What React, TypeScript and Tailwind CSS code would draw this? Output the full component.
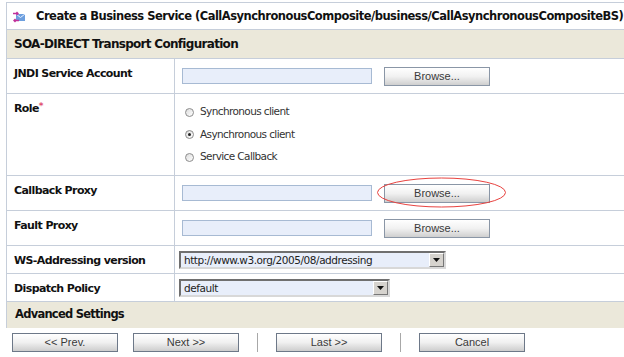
import React from "react";

const tah = { fontFamily: '"DejaVu Sans", Verdana, sans-serif' };

function Label({ children }: { children: React.ReactNode }) {
  return (
    <div
      className="w-[168px] shrink-0 border-r border-[#c6ceda] pl-[7px] pt-[8px] text-[11px] font-bold leading-[13px] tracking-[-0.6px] text-[#111]"
      style={tah}
    >
      {children}
    </div>
  );
}

function BrowseBtn() {
  return (
    <div
      className="flex h-[19px] w-[106px] items-center justify-center border border-[#8a96a6] bg-gradient-to-b from-[#ffffff] via-[#f1f1f1] to-[#cfcfcf] text-[11px] text-[#3a3a3a]"
      style={{ fontFamily: '"Liberation Sans", Arial, sans-serif' }}
    >
      Browse...
    </div>
  );
}

function TextInput() {
  return <div className="h-[16px] w-[190px] border border-[#a7bad3] bg-[#e8eefa]" />;
}

function Radio({ checked, label }: { checked?: boolean; label: string }) {
  return (
    <div className="flex h-[22.5px] items-center">
      <div className="ml-[10px] flex h-[9px] w-[9px] items-center justify-center rounded-full border border-[#8c8c8c] bg-gradient-to-br from-[#dcdcdc] to-[#ffffff]">
        {checked && <div className="h-[3px] w-[3px] rounded-full bg-[#222]" />}
      </div>
      <span
        className="ml-[6px] text-[10.5px] tracking-[-0.6px] text-[#333]"
        style={tah}
      >
        {label}
      </span>
    </div>
  );
}

function Select({ width, text }: { width: number; text: string }) {
  return (
    <div
      className="flex h-[18px] items-stretch border-2 border-t-[#6f6f6f] border-l-[#6f6f6f] border-b-[#d8d8d8] border-r-[#d8d8d8] bg-[#e8eefa]"
      style={{ width }}
    >
      <div
        className="flex-1 pl-[3px] text-[10.5px] leading-[14px] tracking-[-0.45px] text-[#222]"
        style={tah}
      >
        {text}
      </div>
      <div className="flex w-[15px] items-center justify-center border border-t-[#ffffff] border-l-[#ffffff] border-b-[#777] border-r-[#777] bg-[#d6d3ce]">
        <svg width="7" height="4" viewBox="0 0 7 4">
          <path d="M0 0h7L3.5 4z" fill="#111" />
        </svg>
      </div>
    </div>
  );
}

function NavBtn({ children }: { children: React.ReactNode }) {
  return (
    <div
      className="flex h-[19px] w-[106px] items-center justify-center border border-[#6d7888] bg-gradient-to-b from-[#ffffff] via-[#f0f0f0] to-[#cdcdcd] text-[11px] text-[#3a3a3a]"
      style={{ fontFamily: '"Liberation Sans", Arial, sans-serif' }}
    >
      {children}
    </div>
  );
}

export default function App() {
  return (
    <div className="relative h-[357px] w-[624px] overflow-hidden bg-white pt-[2px]">
      <div className="ml-[6px] border-l border-[#c6ceda]">
        {/* title */}
        <div className="flex h-[27px] items-center border-t border-[#c6ceda] pl-[6px] pt-[1px]">
          <svg width="12" height="12" viewBox="0 0 12 12" className="mr-[11px] shrink-0">
            <rect x="3" y="3" width="9" height="7" fill="#6d9fde" />
            <path d="M3 3l4.5 3.5L12 3" fill="none" stroke="#e8f0ff" strokeWidth="1" />
            <path d="M0 2.5h5M3.5 1l1.5 1.5L3.5 4" fill="none" stroke="#c0309a" strokeWidth="1.4" />
            <path d="M1 9.5h5M2.5 8L1 9.5 2.5 11" fill="none" stroke="#c0309a" strokeWidth="1.4" />
          </svg>
          <span
            className="whitespace-nowrap text-[11.5px] font-bold tracking-[-0.5px] text-[#111]"
            style={tah}
          >
            Create a Business Service (CallAsynchronousComposite/business/CallAsynchronousCompositeBS)
          </span>
        </div>
        {/* section header */}
        <div className="flex h-[29px] items-center border-t border-[#c6ceda] bg-[#ebe8da] pl-[7px]">
          <span
            className="whitespace-nowrap text-[12px] font-bold tracking-[-0.7px] text-[#111]"
            style={tah}
          >
            SOA-DIRECT Transport Configuration
          </span>
        </div>
        {/* JNDI */}
        <div className="flex h-[35px] border-t border-[#c6ceda]">
          <Label>JNDI Service Account</Label>
          <div className="flex flex-1 items-center gap-[12px] pl-[7px]">
            <TextInput />
            <BrowseBtn />
          </div>
        </div>
        {/* Role */}
        <div className="flex h-[82px] border-t border-[#c6ceda]">
          <Label>
            Role<span className="relative -top-[3px] text-[9px] text-[#e05070]">*</span>
          </Label>
          <div className="flex flex-1 flex-col pt-[7px]">
            <Radio label="Synchronous client" />
            <Radio checked label="Asynchronous client" />
            <Radio label="Service Callback" />
          </div>
        </div>
        {/* Callback */}
        <div className="flex h-[35px] border-t border-[#c6ceda]">
          <Label>Callback Proxy</Label>
          <div className="flex flex-1 items-center gap-[12px] pl-[7px]">
            <TextInput />
            <BrowseBtn />
          </div>
        </div>
        {/* Fault */}
        <div className="flex h-[35px] border-t border-[#c6ceda]">
          <Label>Fault Proxy</Label>
          <div className="flex flex-1 items-center gap-[12px] pl-[7px]">
            <TextInput />
            <BrowseBtn />
          </div>
        </div>
        {/* WS-Addressing */}
        <div className="flex h-[28px] border-t border-[#c6ceda]">
          <Label>WS-Addressing version</Label>
          <div className="flex flex-1 items-center pl-[4px]">
            <Select width={267} text="http://www.w3.org/2005/08/addressing" />
          </div>
        </div>
        {/* Dispatch */}
        <div className="flex h-[28px] border-t border-[#c6ceda]">
          <Label>Dispatch Policy</Label>
          <div className="flex flex-1 items-center pl-[4px]">
            <Select width={211} text="default" />
          </div>
        </div>
        {/* Advanced */}
        <div className="flex h-[27px] items-center border-t border-[#c6ceda] bg-[#ebe8da] pl-[8px]">
          <span
            className="whitespace-nowrap text-[11.5px] font-bold tracking-[-0.75px] text-[#111]"
            style={tah}
          >
            Advanced Settings
          </span>
        </div>
      </div>
      {/* nav buttons */}
      <div className="mt-[5px] flex items-center pl-[12px]">
        <NavBtn>&lt;&lt; Prev.</NavBtn>
        <div className="w-[15px]" />
        <NavBtn>Next &gt;&gt;</NavBtn>
        <div className="mx-[18px] h-[19px] w-px bg-[#a8a8a8]" />
        <NavBtn>Last &gt;&gt;</NavBtn>
        <div className="mx-[18px] h-[19px] w-px bg-[#a8a8a8]" />
        <NavBtn>Cancel</NavBtn>
      </div>
      {/* red annotation ellipse */}
      <svg className="pointer-events-none absolute left-0 top-0" width="624" height="357">
        <ellipse cx="441.5" cy="192.5" rx="64" ry="14.5" fill="none" stroke="#e8423f" strokeWidth="1" />
      </svg>
    </div>
  );
}
